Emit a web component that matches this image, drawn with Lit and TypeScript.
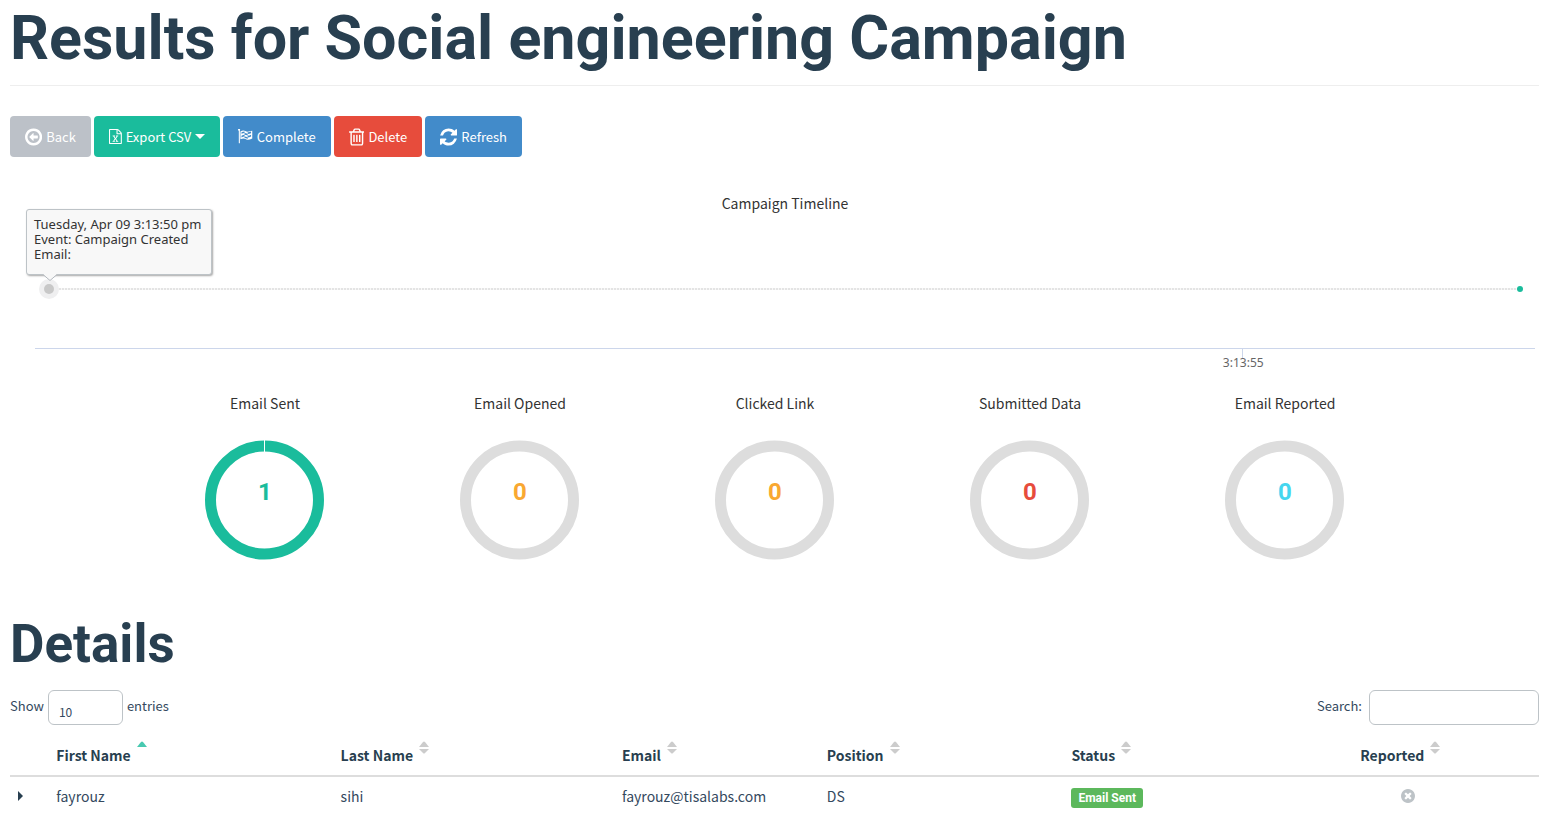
import { LitElement, html, css, svg, nothing } from "lit";
import { customElement, state } from "lit/decorators.js";

const ICONS: Record<string, { box: string; d: string }> = {
  back: {
    box: "128 0 1536 1792",
    d: "M1280 800v192q0 13-9.5 22.5t-22.5 9.5h-352v192q0 14-9 23t-23 9q-12 0-24-10l-319-319q-9-9-9-23t9-23l320-320q9-9 23-9 13 0 22.5 9.5t9.5 22.5v192h352q13 0 22.5 9.5t9.5 22.5zm160 96q0-148-73-273t-198-198-273-73-273 73-198 198-73 273 73 273 198 198 273 73 273-73 198-198 73-273zm224 0q0 209-103 385.5t-279.5 279.5-385.5 103-385.5-103-279.5-279.5-103-385.5 103-385.5 279.5-279.5 385.5-103 385.5 103 279.5 279.5 103 385.5z",
  },
  excel: {
    box: "128 0 1536 1792",
    d: "M1596 380q28 28 48 76t20 88v1152q0 40-28 68t-68 28h-1344q-40 0-68-28t-28-68v-1600q0-40 28-68t68-28h896q40 0 88 20t76 48zm-444-244v376h376q-10-29-22-41l-313-313q-12-12-41-22zm384 1528v-1024h-416q-40 0-68-28t-28-68v-416h-768v1536h1280zm-979-234v106h281v-106h-75l103-161q5-7 10-16.5t7.5-13.5 3.5-4h2q1 4 5 10 2 4 4.5 7.5t6 8 6.5 8.5l107 161h-76v106h291v-106h-68l-192-273 195-282h67v-107h-279v107h74l-103 159q-4 7-10 16.5t-9 13.5l-2 3h-2q-1-4-5-10-6-11-17-23l-106-159h76v-107h-290v107h68l189 272-194 283h-68z",
  },
  flag: {
    box: "96 0 1728 1792",
    d: "M128 190a128 128 0 1 1 192 0v1474q0 32-32 32h-64q-32 0-32-32v-1474zM384 300Q720 100 960 250T1800 220V1130Q1300 1400 1060 1230T384 1220zM512 380V580Q700 480 880 480V290Q700 280 512 380zM880 480V680Q1060 690 1250 790V590Q1080 490 880 480zM1250 590Q1440 600 1660 500V310Q1440 400 1250 390zM512 800V1010Q700 900 880 900V680Q700 690 512 800zM1250 790V1000Q1440 1010 1660 890V690Q1440 790 1250 790zM880 900V1090Q1060 1090 1250 1200V1000Q1060 900 880 900z",
  },
  trash: {
    box: "192 0 1408 1792",
    d: "M704 736v576q0 14-9 23t-23 9h-64q-14 0-23-9t-9-23v-576q0-14 9-23t23-9h64q14 0 23 9t9 23zm256 0v576q0 14-9 23t-23 9h-64q-14 0-23-9t-9-23v-576q0-14 9-23t23-9h64q14 0 23 9t9 23zm256 0v576q0 14-9 23t-23 9h-64q-14 0-23-9t-9-23v-576q0-14 9-23t23-9h64q14 0 23 9t9 23zm128 724v-948h-896v948q0 22 7 40.5t14.5 27 10.5 8.5h832q3 0 10.5-8.5t14.5-27 7-40.5zm-672-1076h448l-48-117q-7-9-17-11h-317q-10 2-17 11zm928 32v64q0 14-9 23t-23 9h-96v948q0 83-47 143.5t-113 60.5h-832q-66 0-113-58.5t-47-141.5v-952h-96q-14 0-23-9t-9-23v-64q0-14 9-23t23-9h309l70-167q15-37 54-63t79-26h320q40 0 79 26t54 63l70 167h309q14 0 23 9t9 23z",
  },
  refresh: {
    box: "128 0 1536 1792",
    d: "M1639 1056q0 5-1 7-64 268-268 434.5t-478 166.5q-146 0-282.5-55t-243.5-157l-129 129q-19 19-45 19t-45-19-19-45v-448q0-26 19-45t45-19h448q26 0 45 19t19 45-19 45l-137 137q71 66 161 102t187 36q134 0 250-65t186-179q11-17 53-117 8-23 30-23h192q13 0 22.5 9.5t9.5 22.5zm25-800v448q0 26-19 45t-45 19h-448q-26 0-45-19t-19-45 19-45l138-138q-148-137-349-137-134 0-250 65t-186 179q-11 17-53 117-8 23-30 23h-199q-13 0-22.5-9.5t-9.5-22.5v-7q65-268 270-434.5t480-166.5q146 0 284 55.5t245 156.5l130-129q19-19 45-19t45 19 19 45z",
  },
  cross: {
    box: "128 128 1536 1536",
    d: "M1277 1122q0-26-19-45l-181-181 181-181q19-19 19-45 0-27-19-46l-90-90q-19-19-46-19-26 0-45 19l-181 181-181-181q-19-19-45-19-27 0-46 19l-90 90q-19 19-19 46 0 26 19 45l181 181-181 181q-19 19-19 45 0 27 19 46l90 90q19 19 46 19 26 0 45-19l181-181 181 181q19 19 45 19 27 0 46-19l90-90q19-19 19-46zm387-226q0 209-103 385.5t-279.5 279.5-385.5 103-385.5-103-279.5-279.5-103-385.5 103-385.5 279.5-279.5 385.5-103 385.5 103 279.5 279.5 103 385.5z",
  },
};

const icon = (name: string, cls = "") => html`
  <svg class="icon ${cls}" viewBox=${ICONS[name].box} aria-hidden="true">
    <path fill-rule=${name === "flag" ? "evenodd" : "nonzero"} d=${ICONS[name].d}></path>
  </svg>`;

const STATS = [
  { label: "Email Sent", value: 1, tone: "green" },
  { label: "Email Opened", value: 0, tone: "orange" },
  { label: "Clicked Link", value: 0, tone: "orange" },
  { label: "Submitted Data", value: 0, tone: "red" },
  { label: "Email Reported", value: 0, tone: "blue" },
];

const COLUMNS = ["First Name", "Last Name", "Email", "Position", "Status", "Reported"];

@customElement("campaign-stat")
class CampaignStat extends LitElement {
  static properties = { label: {}, value: { type: Number }, tone: {} };
  declare label: string;
  declare value: number;
  declare tone: string;

  static styles = css`
    :host { display: flex; flex-direction: column; align-items: center; }
    .label { font-size: 14px; line-height: 24px; color: #333; }
    .ring {
      display: grid;
      place-items: center;
      margin-top: 25px;
      width: 120px;
      height: 120px;
    }
    svg, .value { grid-area: 1 / 1; }
    svg { width: 120px; height: 120px; }
    circle { fill: none; stroke: #ddd; stroke-width: 11; }
    .full { stroke: #1abc9c; }
    .seam { stroke: #fff; stroke-width: 1; }
    .value { font: 700 24px/24px Roboto, sans-serif; padding-bottom: 16px; }
    .green { color: #1abc9c; }
    .orange { color: #f9a831; }
    .red { color: #e74c3c; }
    .blue { color: #45d6ef; }
  `;

  render() {
    const full = this.value > 0;
    return html`
      <div class="label">${this.label}</div>
      <div class="ring">
        <svg viewBox="0 0 120 120" aria-hidden="true">
          <circle class=${full ? "full" : ""} cx="59.5" cy="60" r="54"></circle>
          ${full ? svg`<path class="seam" d="M59.5 0V12"></path>` : nothing}
        </svg>
        <span class="value ${this.tone}">${this.value}</span>
      </div>`;
  }
}

@customElement("app-root")
class AppRoot extends LitElement {
  @state() private sortColumn = "First Name";

  static styles = css`
    :host {
      display: block;
      box-sizing: border-box;
      padding: 0 11px 0 10px;
      font-family: "Noto Sans CJK SC", "Open Sans", sans-serif;
      font-size: 14px;
      line-height: 20px;
      color: #34495e;
      background: #fff;
    }
    h1, h2 { margin: 0; font-family: Roboto, sans-serif; font-weight: 700; color: #283f50; }
    h1 { font-size: 61px; line-height: 66px; padding: 5px 0 14px; border-bottom: 1px solid #eee; }
    h2 { font-size: 53px; line-height: 58px; margin-top: 55px; }
    .icon { fill: currentColor; display: block; flex: none; }
    .lg { height: 20px; }
    .sm { height: 15px; }

    .toolbar { display: flex; flex-wrap: wrap; gap: 3px; margin-top: 30px; }
    .btn {
      display: flex;
      align-items: center;
      gap: 4px;
      height: 41px;
      padding: 0 15px;
      border: 0;
      border-radius: 4px;
      font: inherit;
      font-size: 13px;
      color: #fff;
      cursor: pointer;
    }
    .grey { background: #bcc1c8; }
    .green { background: #1abc9c; }
    .blue { background: #428bca; }
    .red { background: #e74c3c; }
    .caret { border: 5px solid transparent; border-top-color: #fff; border-bottom: 0; }

    .chart { margin: 34px 4px 0 25px; }
    .chart-title { text-align: center; font-size: 14px; line-height: 24px; color: #333; }
    .plot { position: relative; height: 132px; margin-top: 1px; border-bottom: 1px solid #ccd6eb; }
    .link {
      position: absolute;
      left: 1%;
      right: 1%;
      top: 72px;
      height: 2px;
      background: repeating-linear-gradient(90deg, #e4e4e4 0 2px, #f8f8f8 2px 3px);
    }
    .dot { position: absolute; top: 70px; width: 6px; height: 6px; margin-left: -3px; border-radius: 50%; background: #1abc9c; }
    .dot.halo { top: 68px; width: 10px; height: 10px; margin-left: -5px; background: #c8c8c8; box-shadow: 0 0 0 5px #efeff0; }
    .tick { position: absolute; top: 132px; height: 10px; border-left: 1px solid #ccd6eb; }
    .tick-label { position: absolute; top: 139px; transform: translateX(-50%); font: 12px/16px "Noto Sans", sans-serif; color: #666; }
    .tooltip {
      position: absolute;
      left: -9px;
      top: -7px;
      box-sizing: border-box;
      width: 186px;
      height: 66px;
      padding: 7px;
      border: 1px solid #bdc3c7;
      border-radius: 3px;
      background: #f8f8f8;
      box-shadow: 1px 1px 2px rgba(0, 0, 0, 0.35);
      font: 13px/15px "Noto Sans", sans-serif;
      color: #333;
      white-space: nowrap;
    }
    .pointer { position: absolute; left: 16px; top: 64px; width: 14px; height: 7px; display: block; }
    .pointer path { fill: #f8f8f8; stroke: #b4babf; }

    .stats { display: grid; grid-template-columns: 1fr repeat(5, 2fr) 1fr; margin: 42px -1px 0 0; }
    .stats campaign-stat:first-child { grid-column-start: 2; }

    .controls { display: flex; justify-content: space-between; margin-top: 17px; font-size: 13px; }
    .controls label { display: flex; align-items: flex-start; gap: 4px; line-height: 32px; }
    .field {
      box-sizing: border-box;
      height: 35px;
      margin: 0;
      border: 1px solid #bdc3c7;
      border-radius: 6px;
      background: #fff;
      font: inherit;
      color: inherit;
    }
    select.field { appearance: none; width: 75px; padding: 8px 10px 0; font-size: 12px; line-height: 20px; }
    input.field { width: 170px; padding: 6px 10px; }
    .search { margin-left: 3px; }

    table { width: 100%; margin-top: 6px; border-collapse: collapse; table-layout: fixed; }
    .c0 { width: 2.5%; } .c1 { width: 18.6%; } .c2 { width: 18.4%; } .c3 { width: 13.4%; }
    .c4 { width: 16%; } .c5 { width: 14%; } .c6 { width: 17.1%; }
    th { padding: 6px 8px 10px; height: 28px; text-align: left; vertical-align: bottom; border-bottom: 2px solid #ddd; }
    td { padding: 7px 8px 9px; height: 24px; }
    .sort { display: flex; gap: 6px; padding: 0; border: 0; background: none; font: inherit; font-weight: 700; color: #283f50; cursor: pointer; }
    .arrows { width: 10px; height: 14px; fill: #ccc; margin-top: -4px; }
    .arrows .on { fill: #48c9b0; }
    .reported { text-align: center; padding-right: 24px; }
    .reported .sort { display: inline-flex; }
    td.center { text-align: center; }
    td.center .icon { width: 14px; height: 14px; margin: 0 auto; fill: #bdc3c7; }
    td.status { vertical-align: bottom; }
    .expand { display: block; padding: 0; border: 0; background: none; cursor: pointer; }
    .expand::before { content: ""; display: block; border: 5px solid transparent; border-left-color: #283f50; border-right: 0; }
    .badge {
      display: block;
      width: max-content;
      border-radius: 3px;
      padding: 0 7px;
      background: #5cb85c;
      color: #fff;
      font: 700 12px/20px Roboto, sans-serif;
    }
  `;

  private header(name: string) {
    const active = this.sortColumn === name;
    return html`
      <th scope="col" class=${name === "Reported" ? "reported" : ""}>
        <button class="sort" @click=${() => (this.sortColumn = name)}>
          <span>${name}</span>
          <svg class="arrows" viewBox="0 0 10 14" aria-hidden="true">
            <path class=${active ? "on" : ""} d="M0 6L4 1Q5 0 6 1L10 6z"></path>
            ${active ? nothing : svg`<path d="M0 8H10L6 12Q5 13 4 12z"></path>`}
          </svg>
        </button>
      </th>`;
  }

  render() {
    return html`
      <h1>Results for Social engineering Campaign</h1>
      <div class="toolbar">
        <button class="btn grey">${icon("back", "lg")}<span>Back</span></button>
        <button class="btn green">${icon("excel", "sm")}<span>Export CSV</span><i class="caret"></i></button>
        <button class="btn blue">${icon("flag", "sm")}<span>Complete</span></button>
        <button class="btn red">${icon("trash", "lg")}<span>Delete</span></button>
        <button class="btn blue">${icon("refresh", "lg")}<span>Refresh</span></button>
      </div>

      <section class="chart">
        <div class="chart-title">Campaign Timeline</div>
        <div class="plot">
          <div class="link"></div>
          <div class="dot halo" style="left:0.93%"></div>
          <div class="dot" style="left:99%"></div>
          <div class="tick" style="left:80.45%"></div>
          <div class="tick-label" style="left:80.55%">3:13:55</div>
          <div class="tooltip">
            Tuesday, Apr 09 3:13:50 pm<br />Event: Campaign Created<br />Email:
            <svg class="pointer" viewBox="0 0 14 7" aria-hidden="true"><path d="M0 -1V0.5L7 6.5L14 0.5V-1"></path></svg>
          </div>
        </div>
      </section>

      <section class="stats">
        ${STATS.map((s) => html`<campaign-stat .label=${s.label} .value=${s.value} .tone=${s.tone}></campaign-stat>`)}
      </section>

      <h2>Details</h2>
      <div class="controls">
        <label>Show
          <select class="field"><option>10</option><option>25</option><option>50</option><option>100</option></select>
          entries</label>
        <label>Search: <input class="field search" type="search" /></label>
      </div>
      <table>
        <colgroup>${[0, 1, 2, 3, 4, 5, 6].map((i) => html`<col class="c${i}" />`)}</colgroup>
        <thead>
          <tr><th></th>${COLUMNS.map((c) => this.header(c))}</tr>
        </thead>
        <tbody>
          <tr>
            <td><button class="expand" aria-label="Show details"></button></td>
            <td>fayrouz</td>
            <td>sihi</td>
            <td>fayrouz@tisalabs.com</td>
            <td>DS</td>
            <td class="status"><span class="badge">Email Sent</span></td>
            <td class="center">${icon("cross")}</td>
          </tr>
        </tbody>
      </table>
    `;
  }
}
